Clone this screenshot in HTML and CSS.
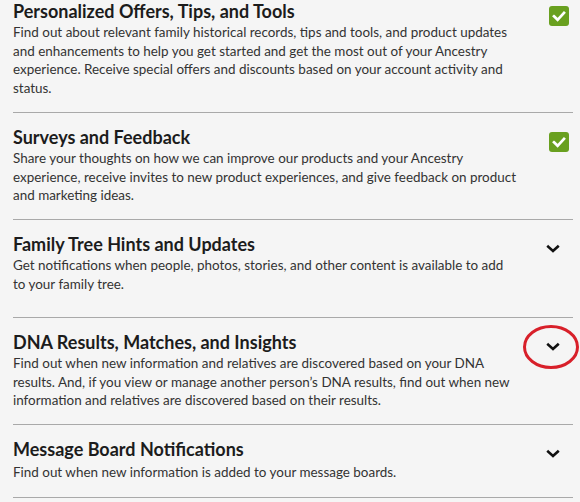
FILE: index.html
```html
<!DOCTYPE html>
<html lang="en">
<head>
<meta charset="utf-8">
<title>Communication Preferences</title>
<link rel="stylesheet" href="styles.css">
</head>
<body>
<div class="prefs">
  <section class="pref">
    <div class="info">
      <h3 class="title">Personalized Offers, Tips, and Tools</h3>
      <p class="desc">Find out about relevant family historical records, tips and tools, and product updates and enhancements to help you get started and get the most out of your Ancestry experience. Receive special offers and discounts based on your account activity and status.</p>
    </div>
    <div class="control">
      <span class="checkbox" role="checkbox" aria-checked="true">
        <svg viewBox="0 0 20 20" width="20" height="20"><path d="M5 10.3 L8.6 13.8 L15 6.8" fill="none" stroke="#fff" stroke-width="2.7" stroke-linecap="square"/></svg>
      </span>
    </div>
  </section>
  <section class="pref">
    <div class="info">
      <h3 class="title">Surveys and Feedback</h3>
      <p class="desc">Share your thoughts on how we can improve our products and your Ancestry experience, receive invites to new product experiences, and give feedback on product and marketing ideas.</p>
    </div>
    <div class="control">
      <span class="checkbox" role="checkbox" aria-checked="true">
        <svg viewBox="0 0 20 20" width="20" height="20"><path d="M5 10.3 L8.6 13.8 L15 6.8" fill="none" stroke="#fff" stroke-width="2.7" stroke-linecap="square"/></svg>
      </span>
    </div>
  </section>
  <section class="pref pref-tall">
    <div class="info">
      <h3 class="title">Family Tree Hints and Updates</h3>
      <p class="desc">Get notifications when people, photos, stories, and other content is available to add to your family tree.</p>
    </div>
    <div class="control">
      <button class="chevron" aria-label="Expand">
        <svg viewBox="0 0 20 20" width="20" height="20"><path d="M5.2 7.6 L10 12 L14.8 7.6" fill="none" stroke="#111" stroke-width="2.6" stroke-linecap="square"/></svg>
      </button>
    </div>
  </section>
  <section class="pref">
    <div class="info">
      <h3 class="title">DNA Results, Matches, and Insights</h3>
      <p class="desc">Find out when new information and relatives are discovered based on your DNA results. And, if you view or manage another person’s DNA results, find out when new information and relatives are discovered based on their results.</p>
    </div>
    <div class="control">
      <button class="chevron" aria-label="Expand">
        <svg viewBox="0 0 20 20" width="20" height="20"><path d="M5.2 7.6 L10 12 L14.8 7.6" fill="none" stroke="#111" stroke-width="2.6" stroke-linecap="square"/></svg>
      </button>
    </div>
  </section>
  <section class="pref pref-short">
    <div class="info">
      <h3 class="title">Message Board Notifications</h3>
      <p class="desc">Find out when new information is added to your message boards.</p>
    </div>
    <div class="control">
      <button class="chevron" aria-label="Expand">
        <svg viewBox="0 0 20 20" width="20" height="20"><path d="M5.2 7.6 L10 12 L14.8 7.6" fill="none" stroke="#111" stroke-width="2.6" stroke-linecap="square"/></svg>
      </button>
    </div>
  </section>
</div>
<svg class="annotation" width="64" height="52" viewBox="0 0 64 52"><ellipse cx="32" cy="26" rx="26.5" ry="20.5" fill="none" stroke="#d8202a" stroke-width="3"/></svg>
</body>
</html>
```
FILE: styles.css
```css
html, body {
  margin: 0;
  padding: 0;
  background: #f5f5f5;
}
body {
  position: relative;
  height: 502px;
  overflow: hidden;
  font-family: Lato, "Liberation Sans", sans-serif;
}
.prefs {
  width: 560px;
  margin: -13px 0 0 13px;
}
.pref {
  display: flex;
  align-items: flex-start;
  padding: 13px 0 14px;
  border-bottom: 1px solid #a9a9a9;
}
.pref-tall {
  padding-bottom: 23.5px;
}
.pref-short {
  padding-bottom: 15px;
}
.pref-short .desc {
  margin-top: 3px;
}
.info {
  flex: 0 0 505.5px;
}
.title {
  margin: 0;
  font-size: 18px;
  line-height: 22px;
  font-weight: 700;
  color: #1c1c1c;
}
.desc {
  margin: 1px 0 0;
  font-size: 13.45px;
  line-height: 18.7px;
  color: #333;
}
.control {
  margin-left: auto;
  padding-top: 6px;
  display: flex;
}
.checkbox {
  display: block;
  width: 20px;
  height: 20px;
  margin-right: 4px;
  border-radius: 3px;
  background: #69a01f;
}
.checkbox svg {
  display: block;
}
.chevron {
  display: block;
  width: 20px;
  height: 20px;
  margin-right: 10.5px;
  padding: 0;
  border: 0;
  background: none;
}
.chevron svg {
  display: block;
}
.annotation {
  position: absolute;
  left: 519px;
  top: 321px;
}
```
